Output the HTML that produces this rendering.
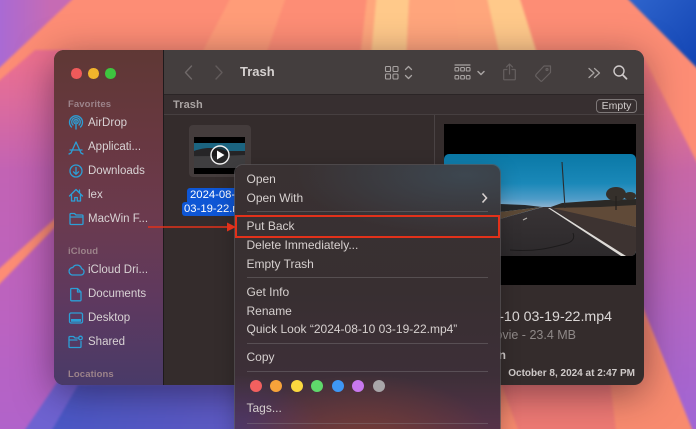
<!DOCTYPE html>
<html>
<head>
<meta charset="utf-8">
<style>
html,body{margin:0;padding:0;width:696px;height:429px;overflow:hidden;background:#fd8d75;}
body{position:relative;font-family:"Liberation Sans",sans-serif;}
#all{position:absolute;left:0;top:0;width:696px;height:429px;overflow:hidden;filter:blur(.35px);}
.abs{position:absolute;}
.t{position:absolute;white-space:nowrap;line-height:16px;height:16px;}
#win{position:absolute;left:54px;top:50px;width:590px;height:335px;border-radius:10px;box-shadow:0 8px 38px rgba(30,10,30,.5);overflow:hidden;background:#342c2c;}
#side{position:absolute;left:54px;top:50px;width:109px;height:335px;border-radius:10px 0 0 10px;background:linear-gradient(180deg,#5f3835 0%,#683840 25%,#6b3a4e 50%,#5e395f 75%,#493a68 100%);border-right:1px solid #1e1a1c;}
.si{font-size:11.5px;color:#d8d2d4;left:88px;}
.sh{font-size:9.5px;color:#9c838a;left:68px;font-weight:bold;letter-spacing:.1px;}
.m{font-size:12px;color:#d6d0cf;left:246.5px;}
#menu{position:absolute;left:235px;top:165px;width:265px;height:280px;border-radius:8px;box-shadow:0 0 0 1px rgba(90,85,88,.7),0 6px 20px rgba(0,0,0,.25);
background:
radial-gradient(ellipse 170px 60px at 230px 10px,rgba(64,88,104,.55),rgba(64,88,104,0)),
radial-gradient(ellipse 130px 70px at 130px 280px,rgba(130,65,45,.75),rgba(130,65,45,0)),
radial-gradient(ellipse 90px 70px at 0px 280px,rgba(70,60,140,.6),rgba(70,60,140,0)),
linear-gradient(180deg,#393132 0%,#382f31 45%,#3d2f38 75%,#533247 92%,#5b3349 100%);}
.sep{position:absolute;left:247px;width:241px;height:1px;background:rgba(150,145,148,.33);}
.dot{position:absolute;width:12px;height:12px;border-radius:50%;top:380px;}
</style>
</head>
<body>
<div id="all">
<!-- wallpaper -->
<svg class="abs" style="left:-20px;top:-20px;filter:blur(1.2px)" width="736" height="469" viewBox="-20 -20 736 469">
<defs>
<linearGradient id="pt" x1="0" y1="20" x2="50" y2="20" gradientUnits="userSpaceOnUse">
<stop offset="0" stop-color="#a96ad4"/><stop offset="1" stop-color="#c66bb4"/>
</linearGradient>
<linearGradient id="pl" x1="0" y1="60" x2="0" y2="429" gradientUnits="userSpaceOnUse">
<stop offset="0" stop-color="#ec7090"/><stop offset=".3" stop-color="#c263b4"/><stop offset=".7" stop-color="#bb63c0"/><stop offset="1" stop-color="#b163ca"/>
</linearGradient>
<linearGradient id="pr" x1="640" y1="70" x2="696" y2="420" gradientUnits="userSpaceOnUse">
<stop offset="0" stop-color="#f57c7c"/><stop offset=".3" stop-color="#c867a6"/><stop offset=".7" stop-color="#b266c4"/><stop offset="1" stop-color="#a165d4"/>
</linearGradient>
<linearGradient id="bl" x1="60" y1="385" x2="230" y2="429" gradientUnits="userSpaceOnUse">
<stop offset="0" stop-color="#4a58c6"/><stop offset="1" stop-color="#5e5ac4"/>
</linearGradient>
<linearGradient id="br" x1="630" y1="0" x2="696" y2="60" gradientUnits="userSpaceOnUse">
<stop offset="0" stop-color="#2e64cc"/><stop offset="1" stop-color="#1345b4"/>
</linearGradient>
</defs>
<rect x="-20" y="-20" width="736" height="469" fill="#fd8d75"/>
<polygon points="-20,-20 93,-20 -20,86" fill="url(#pt)"/>
<polygon points="240,-20 292,-20 262,66 195,66" fill="#ff9c78"/>
<polygon points="369,-20 410,-20 406,66 359,66" fill="#ffa67c"/>
<polygon points="378,-20 410,-20 406,66 370,66" fill="#ffc98a"/>
<polygon points="410,-20 451,-20 460,66 406,66" fill="#ffa57c"/>
<polygon points="451,-20 483,-20 502,66 460,66" fill="#ffa67c"/>
<polygon points="483,-20 514,-20 541,66 502,66" fill="#ffc98a"/>
<polygon points="609,-20 716,-20 716,87" fill="url(#br)"/>
<!-- left -->
<polygon points="-20,97 35,50 70,50 70,205 -20,286" fill="url(#pl)"/>
<polygon points="-20,304 60,222 60,385 14,449 -20,449" fill="url(#pl)"/>
<!-- bottom-left blue -->
<polygon points="12,449 60,378 240,378 240,449" fill="#6f63d2"/>
<polygon points="41,449 78,385 240,385 240,449" fill="url(#bl)"/>
<!-- right -->
<polygon points="640,50 716,200 716,449 700,449 640,300" fill="url(#pr)"/>
<polygon points="500,380 645,380 645,320 700,449 500,449" fill="#f88b6f"/>
<polygon points="500,380 610,380 618,449 525,449" fill="#ee7a74"/>
</svg>

<div id="win"></div>
<!-- toolbar & path bar -->
<div class="abs" style="left:164px;top:50px;width:480px;height:45px;background:#443e3e;border-radius:0 10px 0 0;border-bottom:1px solid #2b2526;box-sizing:border-box;"></div>
<div class="abs" style="left:164px;top:95px;width:480px;height:20px;background:#372f30;border-bottom:1px solid #463f40;box-sizing:border-box;"></div>
<div class="abs" style="left:434px;top:115px;width:1px;height:270px;background:#4a4344;"></div>

<div id="side"></div>

<!-- traffic lights -->
<div class="abs" style="left:71px;top:68px;width:10.5px;height:10.5px;border-radius:50%;background:#ef5a5a;"></div>
<div class="abs" style="left:88px;top:68px;width:10.5px;height:10.5px;border-radius:50%;background:#f2b42c;"></div>
<div class="abs" style="left:105px;top:68px;width:10.5px;height:10.5px;border-radius:50%;background:#3ec53f;"></div>

<!-- sidebar text -->
<div class="t sh" style="top:97px;">Favorites</div>
<div class="t si" style="top:115px;">AirDrop</div>
<div class="t si" style="top:139px;">Applicati...</div>
<div class="t si" style="top:163px;">Downloads</div>
<div class="t si" style="top:187px;">lex</div>
<div class="t si" style="top:211px;">MacWin F...</div>
<div class="t sh" style="top:244px;">iCloud</div>
<div class="t si" style="top:262px;">iCloud Dri...</div>
<div class="t si" style="top:286px;">Documents</div>
<div class="t si" style="top:310px;">Desktop</div>
<div class="t si" style="top:334px;">Shared</div>
<div class="t sh" style="top:367px;">Locations</div>

<!-- sidebar icons -->
<svg class="abs" style="left:0;top:0" width="170" height="385" viewBox="0 0 170 385" fill="none" stroke="#2c9fd6" stroke-width="1.3" stroke-linecap="round" stroke-linejoin="round">
<path d="M71.5 127a6.5 6.5 0 1 1 9 0M73 125a4.3 4.3 0 1 1 6 0M74.6 123.4a2.2 2.2 0 1 1 2.8 0"/>
<path d="M76 121v8" stroke-width="1.4"/>
<path d="M76 142l-5 11M76 142l5 11M70 150h12M69 154l2-1M83 154l-2-1"/>
<circle cx="76" cy="171" r="6"/><path d="M76 167.5v6.5M73.5 171.8l2.5 2.5 2.5-2.5"/>
<path d="M69.5 196l6.5-6.5 6.500 6.5M71.5 195v6h3.2v-3.5h2.6v3.5h3.2v-6M79.5 190v2.5"/>
<path d="M70 223.5v-9a1 1 0 0 1 1-1h3.5l1.5 1.5h6a1 1 0 0 1 1 1v7.5a1 1 0 0 1-1 1h-11a1 1 0 0 1-1-1zM70 217h13"/>
<path d="M72 275h9a3.2 3.2 0 0 0 .6-6.3 4.8 4.8 0 0 0-8.8-1.2 3.8 3.8 0 0 0-.8 7.5z"/>
<path d="M71.5 288.5h6l3.5 3.5v8a.8.8 0 0 1-.8.8h-8.700a.8.8 0 0 1-.8-.8v-10.700a.8.8 0 0 1 .8-.8zM77.5 288.5v3.5h3.5"/>
<rect x="69.5" y="313" width="13" height="10" rx="1.5"/>
<rect x="71" y="319" width="10" height="2.8" fill="#2c9fd6" stroke="none"/>
<path d="M69 346.5v-9a1 1 0 0 1 1-1h3.5l1.5 1.5h3M69 340h8M69 346.5a1 1 0 0 0 1 1h10a1 1 0 0 0 1-1v-5"/>
<circle cx="80.5" cy="338" r="1.8"/>
</svg>

<!-- toolbar icons -->
<svg class="abs" style="left:0;top:0" width="696" height="120" viewBox="0 0 696 120" fill="none" stroke-linecap="round" stroke-linejoin="round">
<path d="M191.5 66l-6 6.5 6 6.5" stroke="#6f6868" stroke-width="1.4"/>
<path d="M216 66l6 6.5-6 6.5" stroke="#625b5b" stroke-width="1.4"/>
<g stroke="#a8a3a2" stroke-width="1.1">
<rect x="385.5" y="66.5" width="5" height="5" rx="1"/><rect x="393" y="66.5" width="5" height="5" rx="1"/>
<rect x="385.5" y="74" width="5" height="5" rx="1"/><rect x="393" y="74" width="5" height="5" rx="1"/>
<path d="M405.5 69.5l3-3 3 3M405.5 75.5l3 3 3-3" stroke-width="1.3"/>
<path d="M455 65h15" stroke-width="1.2"/>
<rect x="455" y="67.5" width="3.7" height="3.5" rx=".8"/><rect x="460.7" y="67.5" width="3.7" height="3.5" rx=".8"/><rect x="466.3" y="67.5" width="3.7" height="3.5" rx=".8"/>
<rect x="455" y="75.5" width="3.7" height="3.5" rx=".8"/><rect x="460.7" y="75.5" width="3.7" height="3.5" rx=".8"/><rect x="466.3" y="75.5" width="3.7" height="3.5" rx=".8"/>
<path d="M478 71.5l3 3 3-3" stroke-width="1.5"/>
<path d="M589 68.5l5 4.5-5 4.500M594.5 68.5l5 4.5-5 4.5" stroke-width="1.3"/>
</g>
<g stroke="#666060" stroke-width="1.2">
<path d="M507 69.5h-2.5a.8.8 0 0 0-.8.8v8.7a.8.8 0 0 0 .8.8h10a.8.8 0 0 0 .8-.8v-8.7a.8.8 0 0 0-.8-.8H512M509.5 74V64.5M506.5 67l3-3 3 3"/>
<path d="M536 74.5l8-8.5h6.5v6.5l-8.5 8.5a1 1 0 0 1-1.4 0l-4.600-4.600a1 1 0 0 1 0-1.400z"/>
<circle cx="547" cy="69.5" r="1"/>
</g>
<circle cx="619" cy="71" r="5" stroke="#cfcaca" stroke-width="1.4"/>
<path d="M622.8 75l3.7 3.7" stroke="#cfcaca" stroke-width="1.8"/>
</svg>

<div class="t" style="left:240px;top:64px;font-size:13px;font-weight:bold;color:#d6d1d0;">Trash</div>
<div class="t" style="left:173px;top:97px;font-size:11px;font-weight:bold;color:#aaa4a3;letter-spacing:.1px;">Trash</div>
<div class="abs" style="left:596px;top:99px;width:41px;height:14px;box-sizing:border-box;border:1px solid #7d7777;border-radius:4px;color:#d2cdcc;font-size:10.5px;line-height:12px;text-align:center;">Empty</div>

<!-- file thumbnail -->
<div class="abs" style="left:189px;top:125px;width:62px;height:52px;background:#443c3c;border-radius:4px;"></div>
<svg class="abs" style="left:194px;top:137px" width="51" height="37" viewBox="0 0 51 37">
<rect width="51" height="37" fill="#000"/>
<rect y="6" width="51" height="25" fill="#3a3a3c"/>
<path d="M0 6h51v8H32C20 9 8 11 0 14z" fill="#1b6480"/>
<path d="M0 14C8 11 20 9 32 14l19 0v5H0z" fill="#262527"/>
<path d="M0 20l51-2v13H0z" fill="#3f3e40"/>
</svg>
<svg class="abs" style="left:208px;top:143px" width="24" height="24" viewBox="0 0 24 24">
<circle cx="12" cy="12" r="9" fill="rgba(20,20,20,.55)" stroke="#f2f2f2" stroke-width="1.4"/>
<path d="M9 7.5v9l7.5-4.5z" fill="#fff"/>
</svg>
<div class="abs" style="left:187px;top:188px;width:52px;height:15px;background:#0e56d5;border-radius:3px 3px 0 0;"></div>
<div class="abs" style="left:182px;top:202px;width:57px;height:14px;background:#0e56d5;border-radius:3px;"></div>
<div class="t" style="left:190px;top:187px;font-size:11.3px;color:#fff;">2024-08-10</div>
<div class="t" style="left:184px;top:201px;font-size:11.3px;color:#fff;">03-19-22.mp4</div>

<!-- preview -->
<div class="abs" style="left:444px;top:124px;width:192px;height:161px;background:#000;"></div>
<svg class="abs" style="left:444px;top:154px;border-radius:5px;" width="192" height="102" viewBox="444 154 192 102">
<defs>
<linearGradient id="sky" x1="0" y1="154" x2="0" y2="207" gradientUnits="userSpaceOnUse">
<stop offset="0" stop-color="#0a78a6"/><stop offset=".55" stop-color="#1a88b8"/><stop offset=".85" stop-color="#4f9cc8"/><stop offset="1" stop-color="#8cb2cf"/>
</linearGradient>
<linearGradient id="rd" x1="0" y1="207" x2="0" y2="256" gradientUnits="userSpaceOnUse">
<stop offset="0" stop-color="#383335"/><stop offset="1" stop-color="#2c292b"/>
</linearGradient>
</defs>
<rect x="444" y="154" width="192" height="102" fill="url(#sky)"/>
<polygon points="500,204 525,205 542,207 500,212" fill="#26282a"/>
<polygon points="500,212 542,207 500,219" fill="#5c4936"/>
<polygon points="548,208 562,203 590,201 605,200 636,199 636,210 560,210" fill="#2b2825"/>
<polygon points="548,208 600,207 636,205 636,227" fill="#604a38"/>
<polygon points="500,219 543,207 552,207 636,256 500,256" fill="url(#rd)"/>
<polygon points="552,208 636,227 636,256 625,256" fill="#3d3331"/>
<polygon points="548,208 550,208 626,256 621,256" fill="#dedbd7"/>
<path d="M527 218l-4 2" stroke="#b5b1ac" stroke-width="1.2"/>
<path d="M562 162l3 46" stroke="#2a2c2e" stroke-width="1.1"/>
<ellipse cx="616" cy="194" rx="10" ry="7" fill="#35302b"/><path d="M616 196v14" stroke="#25211e" stroke-width="1.3"/>
<ellipse cx="630" cy="196" rx="6" ry="4" fill="#35302b"/>
<path d="M510 250c25 2 40-2 55-6 8-2 10-6 8-11" stroke="#1d1b1c" stroke-width="1" fill="none"/>
</svg>

<div class="t" style="right:84px;top:309px;font-size:14.2px;color:#dcd8d7;">2024-08-10 03-19-22.mp4</div>
<div class="t" style="right:120px;top:327px;font-size:12.5px;color:#8f8988;">MPEG-4 movie - 23.4 MB</div>
<div class="t" style="right:190px;top:347px;font-size:12px;font-weight:bold;color:#cfcac9;">Information</div>
<div class="t" style="right:61px;top:366px;font-size:10px;font-weight:bold;color:#cfcac9;">October 8, 2024 at 2:47 PM</div>

<!-- context menu -->
<div id="menu"></div>
<div class="t m" style="top:171px;">Open</div>
<div class="t m" style="top:190px;">Open With</div>
<svg class="abs" style="left:480px;top:192px" width="10" height="12" viewBox="0 0 10 12"><path d="M2.5 1.5l4 4.5-4 4.5" stroke="#d6d0cf" stroke-width="1.6" fill="none"/></svg>
<div class="sep" style="top:211px;"></div>
<div class="t m" style="top:218px;">Put Back</div>
<div class="t m" style="top:237px;">Delete Immediately...</div>
<div class="t m" style="top:256px;">Empty Trash</div>
<div class="sep" style="top:277px;"></div>
<div class="t m" style="top:284px;">Get Info</div>
<div class="t m" style="top:303px;">Rename</div>
<div class="t m" style="top:321px;">Quick Look “2024-08-10 03-19-22.mp4”</div>
<div class="sep" style="top:343px;"></div>
<div class="t m" style="top:349px;">Copy</div>
<div class="sep" style="top:371px;"></div>
<div class="dot" style="left:250px;background:#f2605f;"></div>
<div class="dot" style="left:270px;background:#f7a33a;"></div>
<div class="dot" style="left:291px;background:#fbd93f;"></div>
<div class="dot" style="left:311px;background:#5fd96b;"></div>
<div class="dot" style="left:332px;background:#3e97f5;"></div>
<div class="dot" style="left:352px;background:#c878ee;"></div>
<div class="dot" style="left:373px;background:#a8a5a8;"></div>
<div class="t m" style="top:400px;">Tags...</div>
<div class="sep" style="top:423px;"></div>

<!-- annotation -->
<div class="abs" style="left:235px;top:215px;width:265px;height:23px;box-sizing:border-box;border:2px solid #e2311a;"></div>
<svg class="abs" style="left:145px;top:218px" width="95" height="18" viewBox="0 0 95 18">
<path d="M3 9h80" stroke="#e2311a" stroke-width="1.4"/>
<path d="M82 4.5l9 4.5-9 4.5z" fill="#e2311a"/>
</svg>
</div>
</body>
</html>
